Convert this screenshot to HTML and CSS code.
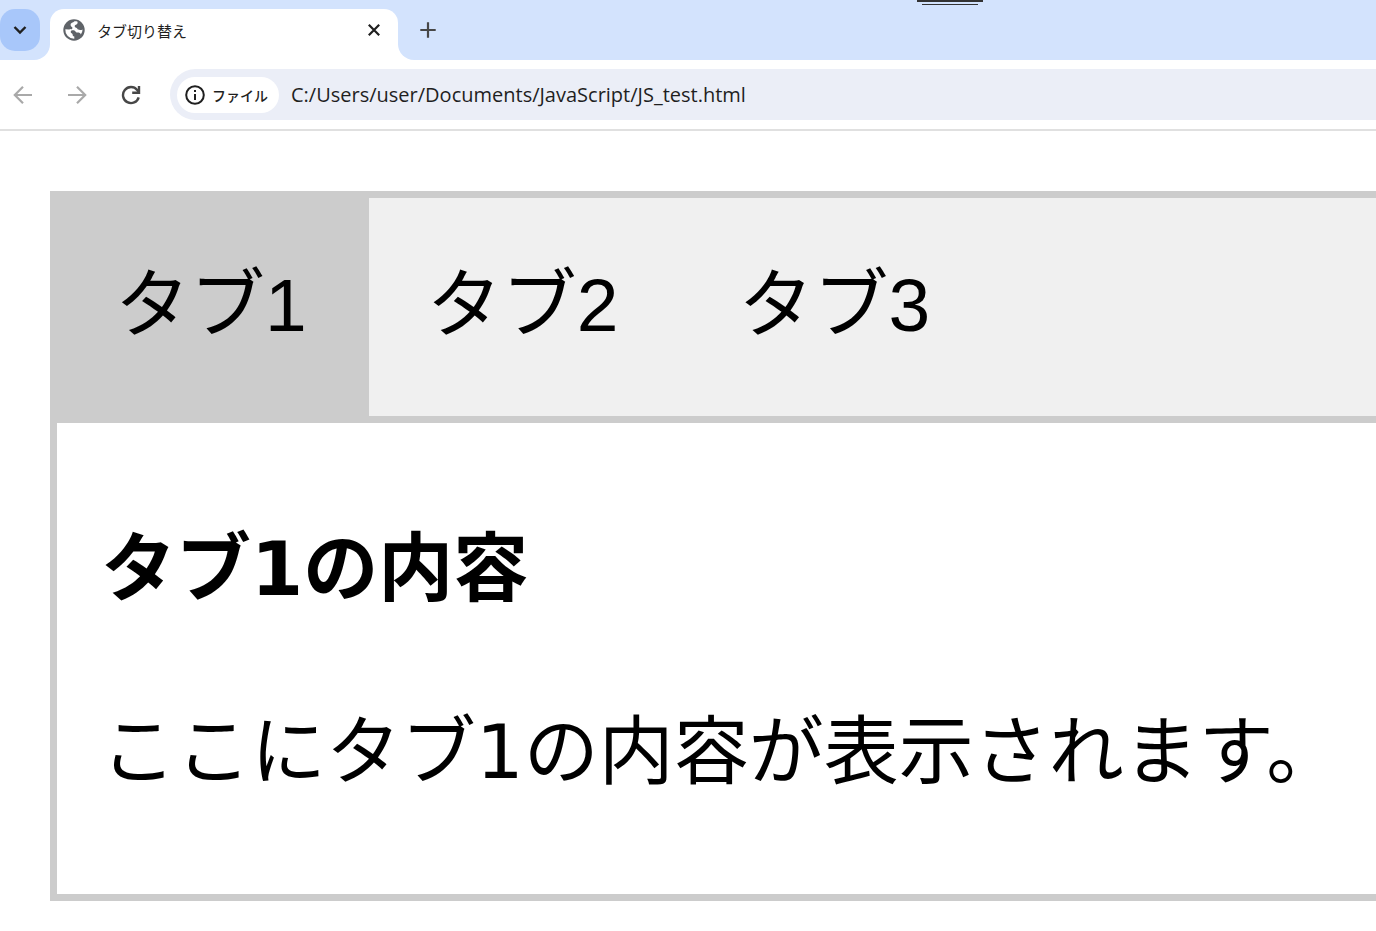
FILE: index.html
```html
<!DOCTYPE html>
<html lang="ja">
<head>
<meta charset="utf-8">
<title>タブ切り替え</title>
<link rel="stylesheet" href="styles.css">
</head>
<body>
<header class="browser">
  <div class="strip">
    <div class="strip-start">
      <button class="tab-search" type="button" aria-label="タブを検索">
        <svg width="14" height="10" viewBox="0 0 14 10" fill="none" stroke="#1f1f1f" stroke-width="2.4"><path d="M1.5 2 7 7.5 12.500 2"/></svg>
      </button>
    </div>
    <div class="strip-tab">
      <div class="page-tab">
        <svg width="22" height="22" viewBox="0 0 22 22"><circle cx="11" cy="11" r="10.700" fill="#5f6368"/><path fill="#fff" d="M11.500 2.300C10 4 7.600 3.600 7.600 6c0 2 1.600 1.500 1.800 2.800.3 1.700-1.500 1.500-3.500 1.600L2.300 10.300a8.800 8.800 0 0 0 9 9.400v-2.200c-1.500-.2-1.700-1.100-1.700-2.200 0-.9-1.900-.8-1.900-2.300 0-1.300 1-1.700 2.300-1.700 2.500 0 2.600 2.300 4.100 2.300 2.600 0 3.300.4 3.700 1.800a8.700 8.700 0 0 0 1.800-4.900c-1.500.8-4.800.9-5.400-.9-.4-1.300-2.500-.6-2.500-2.300 0-2 2.300-1.400 2.700-2.800.2-.8.300-1.300.2-1.800-1-.3-2-.5-3.100-.4Z"/></svg>
        <span class="page-title">タブ切り替え</span>
        <button class="icon-button" type="button" aria-label="閉じる">
          <svg width="12" height="12" viewBox="0 0 12 12" stroke="#1f1f1f" stroke-width="2.200"><path d="M.8.8l10.400 10.400M11.200.8.8 11.200"/></svg>
        </button>
      </div>
    </div>
    <div class="strip-end">
      <button class="icon-button" type="button" aria-label="新しいタブ">
        <svg width="16" height="16" viewBox="0 0 16 16" stroke="#474747" stroke-width="2.200"><path d="M8 .3v15.400M.3 8h15.400"/></svg>
      </button>
    </div>
    <div class="grip"></div>
  </div>
  <div class="toolbar">
    <nav class="nav">
      <button class="icon-button" type="button" aria-label="戻る">
        <svg width="20" height="20" viewBox="0 0 20 20" fill="none" stroke="#a9a9a9" stroke-width="2.200"><path d="M19 10H2.500M10 1.800 1.800 10l8.200 8.200"/></svg>
      </button>
      <button class="icon-button" type="button" aria-label="進む">
        <svg width="20" height="20" viewBox="0 0 20 20" fill="none" stroke="#a9a9a9" stroke-width="2.200"><path d="M1 10h16.500M10 1.800l8.200 8.200-8.200 8.200"/></svg>
      </button>
      <button class="icon-button" type="button" aria-label="再読み込み">
        <svg width="20" height="20" viewBox="0 0 20 20" fill="none" stroke="#474747" stroke-width="2.400"><path d="M17.700 12.300A8 8 0 1 1 16.200 5l1.600 2"/><path d="M18 1v6.800h-6.800"/></svg>
      </button>
    </nav>
    <div class="address">
      <button class="chip" type="button">
        <svg width="20" height="20" viewBox="0 0 20 20" fill="none" stroke="#1f1f1f"><circle cx="10" cy="10" r="8.800" stroke-width="2"/><path stroke-width="2" d="M10 9v6M10 5v2"/></svg>
        <span>ファイル</span>
      </button>
      <input class="url" type="text" aria-label="アドレス" value="C:/Users/user/Documents/JavaScript/JS_test.html">
    </div>
  </div>
</header>
<main class="page">
  <div class="tabs" role="tablist">
    <button class="tab active" id="tab1" type="button" role="tab" aria-selected="true" aria-controls="panel1">タブ1</button>
    <button class="tab" type="button" role="tab" aria-selected="false">タブ2</button>
    <button class="tab" type="button" role="tab" aria-selected="false">タブ3</button>
  </div>
  <section class="panel" id="panel1" role="tabpanel" aria-labelledby="tab1">
    <h3>タブ1の内容</h3>
    <p>ここにタブ1の内容が表示されます。</p>
  </section>
</main>
</body>
</html>
```
FILE: styles.css
```css
* { box-sizing: border-box; }
body {
  margin: 0;
  background: #fff;
  color: #000;
  overflow-x: hidden;
  font-family: "DejaVu Sans", "Noto Sans CJK JP", sans-serif;
}
button {
  border: 0;
  margin: 0;
  padding: 0;
  background: none;
  color: inherit;
  font: inherit;
}
svg { display: block; flex: none; }

.browser {
  border-bottom: 2px solid #e0e0e0;
  color: #1f1f1f;
  font-family: "Open Sans", "Noto Sans CJK JP", sans-serif;
}
.strip { display: flex; height: 60px; position: relative; }
.strip-start {
  width: 50px;
  padding-top: 9px;
  background: #d3e3fd;
  border-bottom-right-radius: 16px;
}
.tab-search {
  display: flex;
  align-items: center;
  justify-content: center;
  width: 40px;
  height: 42px;
  border-radius: 15px;
  background: #a8c7fa;
}
.strip-tab { width: 348px; padding-top: 9px; background: #d3e3fd; }
.page-tab {
  display: flex;
  align-items: center;
  gap: 12px;
  height: 51px;
  padding: 0 12px 9px 13px;
  border-radius: 14px 14px 0 0;
  background: #fff;
}
.page-title { flex: 1; font-size: 15px; }
.icon-button {
  display: flex;
  align-items: center;
  justify-content: center;
  width: 24px;
  height: 24px;
}
.strip-end {
  flex: 1;
  padding: 18px;
  background: #d3e3fd;
  border-bottom-left-radius: 16px;
}
.grip {
  position: absolute;
  top: 0;
  left: 917px;
  width: 66px;
  height: 5px;
  border-top: 2px solid #333;
}
.grip::after {
  content: "";
  display: block;
  margin: 2px 5px 0;
  height: 1px;
  background: #333;
}
.toolbar { display: flex; align-items: center; padding: 9px 0 9px 11px; }
.nav { display: flex; gap: 30px; margin-right: 27px; }
.address {
  display: flex;
  align-items: center;
  flex: 1;
  gap: 12px;
  height: 51px;
  padding-left: 7px;
  border-radius: 26px 0 0 26px;
  background: #ebeef7;
}
.chip {
  display: flex;
  align-items: center;
  gap: 7px;
  height: 36px;
  padding: 0 11px 0 8px;
  border-radius: 18px;
  background: #fff;
  font-size: 14px;
  font-weight: 500;
}
.url {
  flex: 1;
  min-width: 0;
  border: 0;
  padding: 0;
  background: none;
  color: #1f1f1f;
  font: 20px/28px "Open Sans", sans-serif;
}

.page {
  margin: 60px 0 30px 50px;
  border: 7px solid #ccc;
  border-right: 0;
}
.tabs {
  display: flex;
  background: #f0f0f0;
  border-bottom: 7px solid #ccc;
}
.tab {
  padding: 54px 62px 58px 58px;
  font: 75px/106px "Liberation Sans", "Noto Sans CJK JP", sans-serif;
}
.tab.active { background: #ccc; }
.panel { padding: 90px 0 86px 44px; font-size: 75px; line-height: 112px; }
.panel h3, .panel p { margin: 0; font-size: 75px; }
.panel h3 { margin-bottom: 71px; }
```
